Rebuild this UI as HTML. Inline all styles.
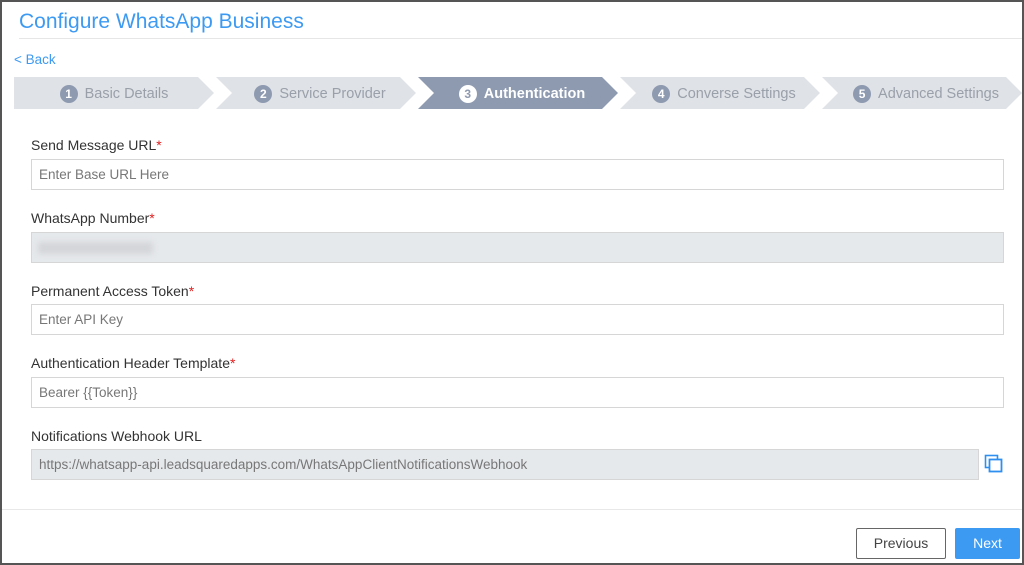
<!DOCTYPE html>
<html><head><style>
*{margin:0;padding:0;box-sizing:border-box}
body{width:1024px;height:565px;background:#fff;font-family:"Liberation Sans",sans-serif;position:relative;overflow:hidden}
.a{position:absolute}
.frame{left:0;top:0;width:1024px;height:565px;border:2px solid #555;pointer-events:none}
.title{left:19px;top:10px;font-size:21px;color:#3d9af2}
.hr{left:19px;top:38px;width:1003px;height:1px;background:#e6e6e6}
.back{left:14px;top:52px;font-size:13.5px;color:#3d9af2}
.step{position:absolute;top:77px;height:32px;width:200px;background:#dfe2e6;color:#9aa0aa;font-size:14.5px;display:flex;align-items:center;justify-content:center;padding-left:8px;padding-top:2px;clip-path:polygon(0 0,184px 0,200px 50%,184px 100%,0 100%,16px 50%)}
.step.first{clip-path:polygon(0 0,184px 0,200px 50%,184px 100%,0 100%);padding-left:0}
.step.act{background:#8e9ab0;color:#fff;font-weight:bold}
.n{display:inline-block;width:18px;height:18px;border-radius:50%;background:#8e9ab0;color:#fff;font-size:12px;font-weight:bold;line-height:18px;text-align:center;margin-right:7px}
.act .n{background:#fff;color:#8e9ab0}
.lbl{left:31px;font-size:14px;color:#333}
.lbl b{color:#e02020;font-weight:normal}
.in{left:31px;width:973px;height:31px;border:1px solid #d6d6d6;font-size:13.5px;color:#777;line-height:29px;padding-left:7px}
.g{background:#e6e9ec}
.btn{top:528px;height:31px;font-size:14px;line-height:29px;text-align:center;border-radius:2px}
</style></head><body>
<div class="a title">Configure WhatsApp Business</div>
<div class="a hr"></div>
<div class="a back">&lt; Back</div>
<div class="step first" style="left:14px"><span class="n">1</span>Basic Details</div>
<div class="step" style="left:216px"><span class="n">2</span>Service Provider</div>
<div class="step act" style="left:418px"><span class="n">3</span>Authentication</div>
<div class="step" style="left:620px"><span class="n">4</span>Converse Settings</div>
<div class="step" style="left:822px"><span class="n">5</span>Advanced Settings</div>

<div class="a lbl" style="top:137px">Send Message URL<b>*</b></div>
<div class="a in" style="top:159px">Enter Base URL Here</div>
<div class="a lbl" style="top:210px">WhatsApp Number<b>*</b></div>
<div class="a in g" style="top:232px"><div style="position:absolute;left:6px;top:9px;width:115px;height:12px;background:#d3d5d8;filter:blur(3px)"></div></div>
<div class="a lbl" style="top:283px">Permanent Access Token<b>*</b></div>
<div class="a in" style="top:304px">Enter API Key</div>
<div class="a lbl" style="top:355px">Authentication Header Template<b>*</b></div>
<div class="a in" style="top:377px">Bearer {{Token}}</div>
<div class="a lbl" style="top:428px">Notifications Webhook URL</div>
<div class="a in g" style="top:449px;width:948px">https://whatsapp-api.leadsquaredapps.com/WhatsAppClientNotificationsWebhook</div>
<svg class="a" style="left:984px;top:454px" width="20" height="20" viewBox="0 0 20 20"><rect x="1.5" y="1.5" width="12" height="12" fill="none" stroke="#2f8ff0" stroke-width="1.6"/><rect x="5.5" y="5.5" width="12" height="12" fill="#fff" stroke="#2f8ff0" stroke-width="1.8"/></svg>
<div class="a" style="left:0;top:509px;width:1024px;height:1px;background:#e8e8e8"></div>
<div class="a btn" style="left:856px;width:90px;border:1px solid #666;color:#444">Previous</div>
<div class="a btn" style="left:955px;width:65px;background:#3d9af2;color:#fff;border:1px solid #3d9af2">Next</div>
<div class="a frame"></div>
</body></html>
